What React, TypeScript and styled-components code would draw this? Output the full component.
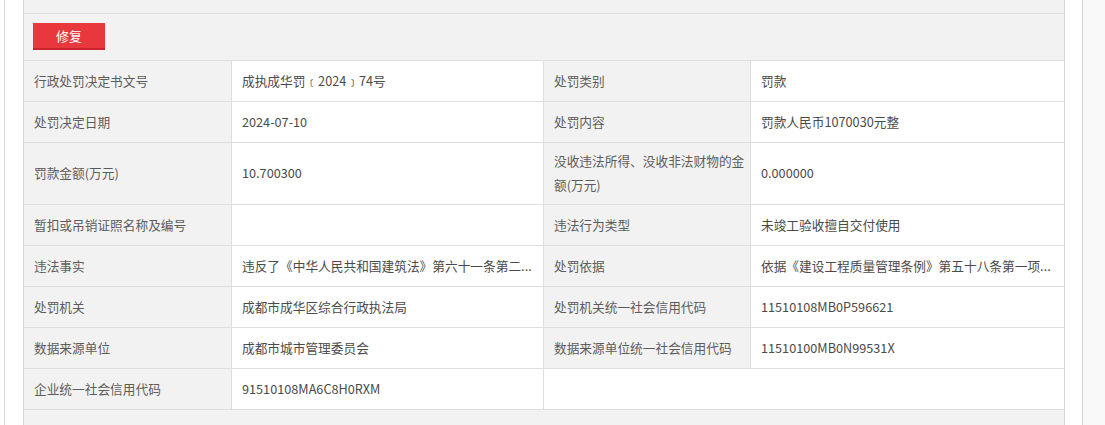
import React from "react";
import styled, { createGlobalStyle } from "styled-components";

type Row = {
  label: string;
  value: string;
  label2?: string;
  value2?: string;
};

const rows: Row[] = [
  { label: "行政处罚决定书文号", value: "成执成华罚﹝2024﹞74号", label2: "处罚类别", value2: "罚款" },
  { label: "处罚决定日期", value: "2024-07-10", label2: "处罚内容", value2: "罚款人民币1070030元整" },
  {
    label: "罚款金额(万元)",
    value: "10.700300",
    label2: "没收违法所得、没收非法财物的金额(万元)",
    value2: "0.000000",
  },
  { label: "暂扣或吊销证照名称及编号", value: "", label2: "违法行为类型", value2: "未竣工验收擅自交付使用" },
  {
    label: "违法事实",
    value: "违反了《中华人民共和国建筑法》第六十一条第二...",
    label2: "处罚依据",
    value2: "依据《建设工程质量管理条例》第五十八条第一项...",
  },
  { label: "处罚机关", value: "成都市成华区综合行政执法局", label2: "处罚机关统一社会信用代码", value2: "11510108MB0P596621" },
  { label: "数据来源单位", value: "成都市城市管理委员会", label2: "数据来源单位统一社会信用代码", value2: "11510100MB0N99531X" },
  { label: "企业统一社会信用代码", value: "91510108MA6C8H0RXM" },
];

const GlobalStyle = createGlobalStyle`
  html, body {
    margin: 0;
    padding: 0;
    background: #fff;
  }
  body {
    font-family: "Microsoft YaHei", "Noto Sans CJK SC", "Noto Sans", sans-serif;
  }
  * {
    box-sizing: border-box;
  }
`;

const Shell = styled.div`
  display: flex;
  height: 425px;
  overflow: hidden;
  background: #fff;
`;

const Gutter = styled.div`
  width: 19px;
  margin-left: 4px;
  border-left: 1px solid #dcdcdc;
  background: #fff;
`;

const Panel = styled.div`
  width: 1042px;
  display: flex;
  flex-direction: column;
  background: #f2f2f2;
  border-left: 1px solid #d6d6d6;
  border-right: 1px solid #d6d6d6;
`;

const TopStrip = styled.div`
  height: 14px;
  border-bottom: 1px solid #dedede;
`;

const Toolbar = styled.div`
  display: flex;
  padding: 9px 9px 10px;
`;

const RepairButton = styled.button`
  width: 72px;
  height: 27px;
  border: none;
  border-bottom: 2px solid #c8262c;
  background: #e8383d;
  color: #fff;
  font-family: inherit;
  font-size: 13px;
  line-height: 24px;
  padding: 0;
  cursor: pointer;
`;

const Grid = styled.div`
  display: grid;
  grid-template-columns: 207px 312px 207px 314px;
  border-top: 1px solid #dedede;
`;

const Cell = styled.div<{ $head?: boolean; $first?: boolean; $span?: number }>`
  display: flex;
  align-items: center;
  min-height: 41px;
  padding: 6px 4px 7px 10px;
  border-bottom: 1px solid #dedede;
  border-left: ${(p) => (p.$first ? "none" : "1px solid #dedede")};
  background: ${(p) => (p.$head ? "#f2f2f2" : "#fff")};
  color: ${(p) => (p.$head ? "#5c5c5c" : "#4a4a4a")};
  font-size: 12.7px;
  line-height: 24px;
  grid-column: ${(p) => (p.$span ? `span ${p.$span}` : "auto")};
  min-width: 0;
`;

const Value = styled.span`
  display: block;
  white-space: nowrap;
  overflow: hidden;
  text-overflow: ellipsis;
`;

const RightGap = styled.div`
  width: 18px;
  border-right: 1px solid #d8d8d8;
  background: #fff;
`;

const RightRail = styled.div`
  flex: 1;
  background: #f9f9f9;
`;

export default function App() {
  return (
    <>
      <GlobalStyle />
      <Shell>
        <Gutter />
        <Panel>
          <TopStrip />
          <Toolbar>
            <RepairButton>修复</RepairButton>
          </Toolbar>
          <Grid>
            {rows.map((r, i) => (
              <React.Fragment key={i}>
                <Cell $head $first>
                  {r.label}
                </Cell>
                <Cell>
                  <Value>{r.value}</Value>
                </Cell>
                {r.label2 ? (
                  <>
                    <Cell $head>{r.label2}</Cell>
                    <Cell>
                      <Value>{r.value2}</Value>
                    </Cell>
                  </>
                ) : (
                  <Cell $span={2} />
                )}
              </React.Fragment>
            ))}
          </Grid>
        </Panel>
        <RightGap />
        <RightRail />
      </Shell>
    </>
  );
}
